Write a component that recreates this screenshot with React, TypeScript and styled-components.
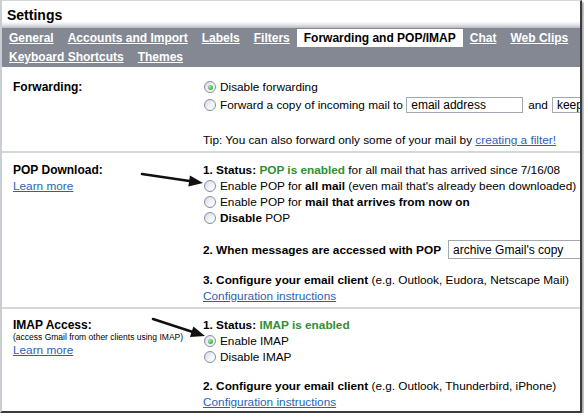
import React from "react";
import styled, { createGlobalStyle } from "styled-components";

const Global = createGlobalStyle`
  html, body { margin: 0; padding: 0; background: #fff; }
  body { font-family: "Liberation Sans", Arial, sans-serif; }
`;

const Frame = styled.div`
  position: relative;
  box-sizing: content-box;
  width: 578px;
  height: 410px;
  border-top: 1px solid #d3d6db;
  border-left: 2px solid #c9cdd4;
  border-right: 2px solid #3c3c3c;
  border-bottom: 2px solid #3c3c3c;
  box-shadow: 2px 2px 2px rgba(0, 0, 0, 0.35);
  background: #fff;
  overflow: hidden;
  font-family: "Liberation Sans", Arial, sans-serif;
  color: #000;
  display: flex;
  flex-direction: column;
`;

const TitleBar = styled.div`
  height: 27px;
  flex: none;
  padding-left: 5px;
  display: flex;
  align-items: center;
  font-size: 14px;
  font-weight: bold;
  background: linear-gradient(to bottom, #fff 0%, #fff 76%, #e4e5e8 88%, #b7bac0 100%);
`;

const TabBar = styled.div`
  flex: none;
  background: #838893;
  padding: 1px 0;
  display: flex;
  flex-direction: column;
  gap: 1px;
`;

const TabRow = styled.div`
  display: flex;
  white-space: nowrap;
`;

const Tab = styled.span<{ $active?: boolean }>`
  height: 18px;
  line-height: 18px;
  padding: 0 7px;
  font-size: 12px;
  font-weight: bold;
  color: ${(p) => (p.$active ? "#000" : "#fff")};
  background: ${(p) => (p.$active ? "#fff" : "transparent")};
  text-decoration: ${(p) => (p.$active ? "none" : "underline")};
`;

const Section = styled.div<{ $pt: number; $pb: number; $last?: boolean }>`
  flex: none;
  display: grid;
  grid-template-columns: 190px minmax(0, 1fr);
  padding: ${(p) => p.$pt}px 0 ${(p) => p.$pb}px 11px;
  border-bottom: ${(p) => (p.$last ? "none" : "2px solid #d4d7dc")};
  font-size: 11.8px;
  line-height: 16px;
`;

const LabelCol = styled.div`
  display: flex;
  flex-direction: column;
`;

const Label = styled.div`
  font-weight: bold;
  font-size: 12px;
  height: 16px;
`;

const Small = styled.div`
  font-size: 8.5px;
  line-height: 9px;
  height: 9px;
  white-space: nowrap;
`;

const Link = styled.a`
  color: #2f5fb3;
  text-decoration: underline;
  cursor: pointer;
`;

const Body = styled.div`
  display: flex;
  flex-direction: column;
  white-space: nowrap;
`;

const Line = styled.div<{ $mt?: number; $h?: number }>`
  display: flex;
  align-items: center;
  height: ${(p) => p.$h ?? 16}px;
  margin-top: ${(p) => p.$mt ?? 0}px;
  white-space: nowrap;
  & > * {
    flex-shrink: 0;
  }
`;

const Green = styled.b`
  color: #2f8f2f;
`;

const Radio = styled.span<{ $checked?: boolean }>`
  flex: none;
  width: 12px;
  height: 12px;
  box-sizing: border-box;
  border-radius: 50%;
  border: 1px solid #7f90a8;
  background: linear-gradient(135deg, #d3d7dd 0%, #f4f5f6 55%, #fff 100%);
  display: inline-flex;
  align-items: center;
  justify-content: center;
  margin: 0 4px 0 1px;
  &::after {
    content: "";
    width: 5px;
    height: 5px;
    border-radius: 50%;
    background: ${(p) =>
      p.$checked ? "radial-gradient(circle at 35% 35%, #9ee69e, #1e9a1e)" : "transparent"};
  }
`;

const TextBox = styled.span<{ $w: number; $h: number }>`
  flex: none;
  box-sizing: border-box;
  width: ${(p) => p.$w}px;
  height: ${(p) => p.$h}px;
  border: 1px solid #a3a8b0;
  padding: 0 4px;
  display: inline-flex;
  align-items: center;
  font-size: 12px;
  background: #fff;
  overflow: hidden;
`;

const Gap = styled.span<{ $w: number }>`
  flex: none;
  display: inline-block;
  width: ${(p) => p.$w}px;
`;

const Overlay = styled.svg`
  position: absolute;
  left: 0;
  top: 0;
  width: 578px;
  height: 410px;
  pointer-events: none;
`;

function Arrow({ x1, y1, x2, y2 }: { x1: number; y1: number; x2: number; y2: number }) {
  const dx = x2 - x1;
  const dy = y2 - y1;
  const len = Math.hypot(dx, dy);
  const ux = dx / len;
  const uy = dy / len;
  const L = 14;
  const W = 5.5;
  const bx = x2 - ux * L;
  const by = y2 - uy * L;
  const p1 = `${x2},${y2}`;
  const p2 = `${bx - uy * W},${by + ux * W}`;
  const p3 = `${bx + uy * W},${by - ux * W}`;
  return (
    <g>
      <line x1={x1} y1={y1} x2={bx + ux * 2} y2={by + uy * 2} stroke="#111" strokeWidth={2.6} strokeLinecap="round" />
      <polygon points={`${p1} ${p2} ${p3}`} fill="#111" />
    </g>
  );
}

const tabRows: { label: string; active?: boolean }[][] = [
  [
    { label: "General" },
    { label: "Accounts and Import" },
    { label: "Labels" },
    { label: "Filters" },
    { label: "Forwarding and POP/IMAP", active: true },
    { label: "Chat" },
    { label: "Web Clips" },
  ],
  [{ label: "Keyboard Shortcuts" }, { label: "Themes" }],
];

export default function App() {
  return (
    <>
      <Global />
      <Frame>
        <TitleBar>Settings</TitleBar>
        <TabBar>
          {tabRows.map((row, i) => (
            <TabRow key={i}>
              {row.map((t) => (
                <Tab key={t.label} $active={t.active}>
                  {t.label}
                </Tab>
              ))}
            </TabRow>
          ))}
        </TabBar>

        <Section $pt={12} $pb={3}>
          <LabelCol>
            <Label>Forwarding:</Label>
          </LabelCol>
          <Body>
            <Line>
              <Radio $checked />
              <span>Disable forwarding</span>
            </Line>
            <Line $mt={1} $h={17}>
              <Radio />
              <span>Forward a copy of incoming mail to&nbsp;</span>
              <TextBox $w={117} $h={16}>email address</TextBox>
              <Gap $w={5} />
              <span>and</span>
              <Gap $w={4} />
              <TextBox $w={60} $h={16}>keep</TextBox>
            </Line>
            <Line $mt={19}>
              <span>
                Tip: You can also forward only some of your mail by <Link>creating a filter!</Link>
              </span>
            </Line>
          </Body>
        </Section>

        <Section $pt={9} $pb={3}>
          <LabelCol>
            <Label>POP Download:</Label>
            <div>
              <Link>Learn more</Link>
            </div>
          </LabelCol>
          <Body>
            <Line>
              <span>
                <b>1. Status:</b> <Green>POP is enabled</Green> for all mail that has arrived since 7/16/08
              </span>
            </Line>
            <Line>
              <Radio />
              <span>
                Enable POP for <b>all mail</b> (even mail that's already been downloaded)
              </span>
            </Line>
            <Line>
              <Radio />
              <span>
                Enable POP for <b>mail that arrives from now on</b>
              </span>
            </Line>
            <Line>
              <Radio />
              <span>
                <b>Disable</b> POP
              </span>
            </Line>
            <Line $mt={14} $h={19}>
              <b>2. When messages are accessed with POP</b>
              <Gap $w={7} />
              <TextBox $w={170} $h={19}>archive Gmail's copy</TextBox>
            </Line>
            <Line $mt={13}>
              <span>
                <b>3. Configure your email client</b> (e.g. Outlook, Eudora, Netscape Mail)
              </span>
            </Line>
            <Line>
              <Link>Configuration instructions</Link>
            </Line>
          </Body>
        </Section>

        <Section $pt={8} $pb={1} $last>
          <LabelCol>
            <Label>IMAP Access:</Label>
            <Small>(access Gmail from other clients using IMAP)</Small>
            <div>
              <Link>Learn more</Link>
            </div>
          </LabelCol>
          <Body>
            <Line>
              <span>
                <b>1. Status:</b> <Green>IMAP is enabled</Green>
              </span>
            </Line>
            <Line>
              <Radio $checked />
              <span>Enable IMAP</span>
            </Line>
            <Line>
              <Radio />
              <span>Disable IMAP</span>
            </Line>
            <Line $mt={13}>
              <span>
                <b>2. Configure your email client</b> (e.g. Outlook, Thunderbird, iPhone)
              </span>
            </Line>
            <Line>
              <Link>Configuration instructions</Link>
            </Line>
          </Body>
        </Section>

        <Overlay viewBox="0 0 578 410">
          <Arrow x1={140} y1={173} x2={201} y2={182} />
          <Arrow x1={151} y1={318} x2={203} y2={335} />
        </Overlay>
      </Frame>
    </>
  );
}
